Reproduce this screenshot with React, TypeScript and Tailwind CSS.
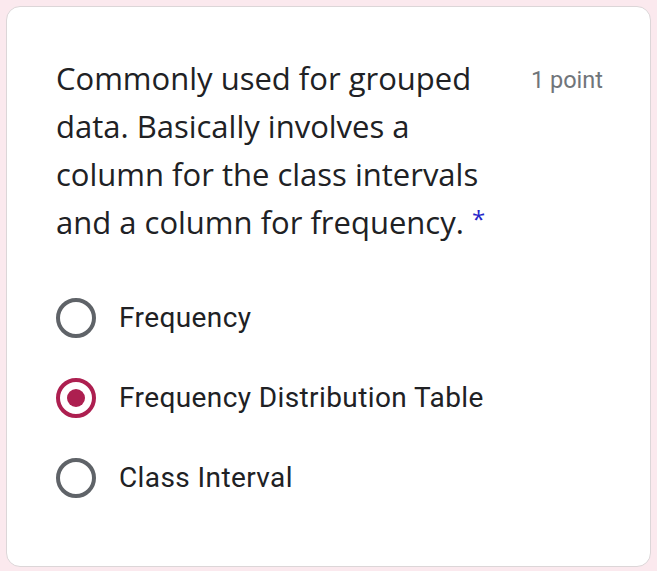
const options = [
  { label: "Frequency", checked: false },
  { label: "Frequency Distribution Table", checked: true },
  { label: "Class Interval", checked: false },
]

const Radio = ({ checked }: { checked: boolean }) => (
  <span
    className={`flex h-[40px] w-[40px] shrink-0 items-center justify-center rounded-full border-[4px] ${
      checked ? "border-[#ad1f50]" : "border-[#5f6368]"
    }`}
  >
    {checked && <span className="h-[18px] w-[18px] rounded-full bg-[#ad1f50]" />}
  </span>
)

const App = () => {
  return (
    <div className="h-[571px] w-[657px] bg-[#fbe9ee] p-[6px] pb-[4px] pr-[6px]">
      <div className="h-full rounded-[14px] border border-[#dcd6d8] bg-white pl-[49px] pr-[47px] pt-[47px]">
        <div className="flex items-start justify-between">
          <p
            className="w-[445px] text-[31px] leading-[48px] text-[#202124]"
            style={{ fontFamily: "'Open Sans', sans-serif" }}
          >
            Commonly used for grouped data. Basically involves a column for the class intervals and a
            column for frequency.{" "}
            <span className="align-[6px] text-[24px] leading-none text-[#2626c9]">*</span>
          </p>
          <span
            className="pt-[10px] text-[23.5px] leading-[32px] text-[#70757a]"
            style={{ fontFamily: "Roboto, sans-serif" }}
          >
            1 point
          </span>
        </div>
        <ul className="mt-[32px]" style={{ fontFamily: "Roboto, sans-serif" }}>
          {options.map((o) => (
            <li key={o.label} className="flex h-[80px] items-center gap-[23px]">
              <Radio checked={o.checked} />
              <span className="text-[28px] tracking-[0.4px] text-[#202124]">{o.label}</span>
            </li>
          ))}
        </ul>
      </div>
    </div>
  )
}

export default App
